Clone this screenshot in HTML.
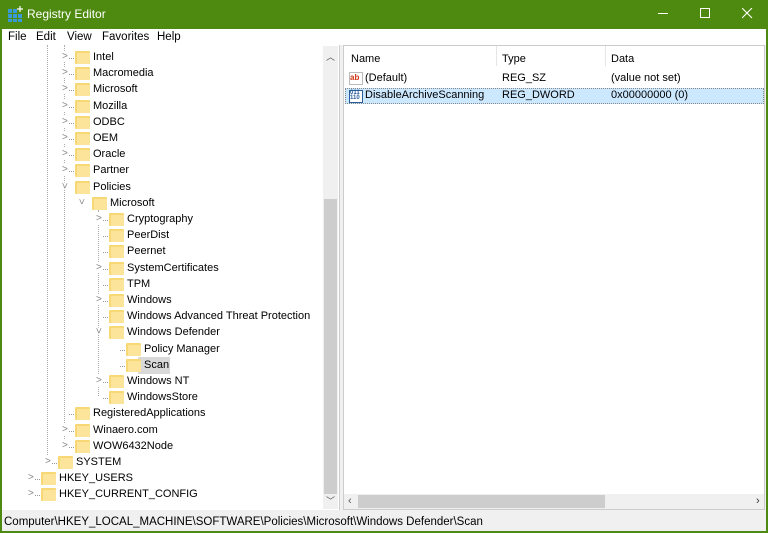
<!DOCTYPE html><html><head><style>
body{margin:0;width:768px;height:533px;overflow:hidden;background:#4c8a12;font-family:"Liberation Sans",sans-serif;font-size:11px;color:#000;position:relative}
.a{position:absolute}
.t{position:absolute;white-space:nowrap}
.fold{position:absolute;width:15px;height:13px;background:#f8d775;border-radius:1px}
.fold:after{content:"";position:absolute;left:2px;top:2px;width:13px;height:11px;background:#fce49a}
.chev{position:absolute;font-size:10px;color:#888}
</style></head><body>
<div class="a" style="left:0;top:0;width:768px;height:29px;background:#4f8a10"></div>
<svg class="a" style="left:8px;top:6px" width="16" height="16"><g fill="#3a9ad9"><rect x="0" y="3" width="4" height="4"/><rect x="5" y="3" width="4" height="4"/><rect x="0" y="8" width="4" height="4"/><rect x="5" y="8" width="4" height="4"/><rect x="10" y="8" width="4" height="4"/><rect x="0" y="13" width="4" height="3"/><rect x="5" y="13" width="4" height="3"/><rect x="10" y="13" width="4" height="3"/></g><path d="M12 0v6M9 3h6" stroke="#fff" stroke-width="1.2"/></svg>
<div class="t" style="left:27px;top:7px;color:#fff;font-size:12px">Registry Editor</div>
<div class="a" style="left:658px;top:13px;width:10px;height:1px;background:#fff"></div>
<div class="a" style="left:700px;top:8px;width:8px;height:8px;border:1px solid #fff"></div>
<svg class="a" style="left:742px;top:8px" width="11" height="11"><path d="M0 0L10 10M10 0L0 10" stroke="#fff" stroke-width="1.1"/></svg>
<div class="a" style="left:2px;top:29px;width:764px;height:502px;background:#f0f0f0"></div>
<div class="a" style="left:2px;top:29px;width:764px;height:16px;background:#fff"></div>
<div class="t" style="left:8px;top:31px;font-size:11.5px">File</div><div class="t" style="left:36px;top:31px;font-size:11.5px">Edit</div><div class="t" style="left:67px;top:31px;font-size:11.5px">View</div><div class="t" style="left:102px;top:31px;font-size:11.5px">Favorites</div><div class="t" style="left:157px;top:31px;font-size:11.5px">Help</div>
<div class="a" style="left:2px;top:45px;width:337px;height:465px;background:#fff;border-right:1px solid #ccc"></div>
<div class="a" style="left:323px;top:46px;width:15px;height:463px;background:#f0f0f0"></div>
<div class="a" style="left:324px;top:199px;width:13px;height:295px;background:#cdcdcd"></div>
<div class="t" style="left:326px;top:50px;font-size:9px;color:#555">︿</div>
<div class="t" style="left:326px;top:494px;font-size:9px;color:#555">﹀</div>
<div class="a" style="left:343px;top:45px;width:422px;height:465px;background:#fff;border:1px solid #ccc;box-sizing:border-box"></div>
<div class="a" style="left:496px;top:46px;width:1px;height:20px;background:#e5e5e5"></div>
<div class="a" style="left:605px;top:46px;width:1px;height:20px;background:#e5e5e5"></div>
<div class="t" style="left:351px;top:53px">Name</div><div class="t" style="left:502px;top:53px">Type</div><div class="t" style="left:611px;top:53px">Data</div>
<div class="a" style="left:349px;top:72px;width:12px;height:11px;border:1px solid #bbb;background:#fff;font-size:8px;color:#d03010;font-weight:bold;line-height:9px">ab</div>
<div class="t" style="left:365px;top:72px">(Default)</div><div class="t" style="left:502px;top:72px">REG_SZ</div><div class="t" style="left:611px;top:72px">(value not set)</div>
<div class="a" style="left:345px;top:88px;width:419px;height:16px;background:#cce8ff;border:1px dotted #888;box-sizing:border-box"></div>
<div class="a" style="left:349px;top:90px;width:12px;height:11px;border:1px solid #2a5c9a;background:#fff;font-size:6px;color:#2a5c9a;line-height:5px;font-weight:bold">011<br>110</div>
<div class="t" style="left:365px;top:89px">DisableArchiveScanning</div><div class="t" style="left:502px;top:89px">REG_DWORD</div><div class="t" style="left:611px;top:89px">0x00000000 (0)</div>
<div class="a" style="left:344px;top:494px;width:420px;height:15px;background:#f0f0f0"></div>
<div class="a" style="left:358px;top:495px;width:247px;height:13px;background:#cdcdcd"></div>
<div class="t" style="left:348px;top:495px;color:#555">‹</div><div class="t" style="left:756px;top:495px;color:#333">›</div>
<div class="t" style="left:4px;top:516px;font-size:11.5px">Computer\HKEY_LOCAL_MACHINE\SOFTWARE\Policies\Microsoft\Windows Defender\Scan</div>
<div class="a" style="left:138px;top:357px;width:32px;height:17px;background:#d9d9d9"></div>
<div class="a" style="left:47px;top:45px;height:410px;border-left:1px dotted #aaa"></div>
<div class="a" style="left:64px;top:45px;height:400px;border-left:1px dotted #aaa"></div>
<div class="a" style="left:98px;top:210px;height:186px;border-left:1px dotted #aaa"></div>
<div id="tree"></div>
<script>
var rows=[["Intel",1,1],["Macromedia",1,1],["Microsoft",1,1],["Mozilla",1,1],["ODBC",1,1],["OEM",1,1],["Oracle",1,1],["Partner",1,1],["Policies",1,2],["Microsoft",2,2],["Cryptography",3,1],["PeerDist",3,0],["Peernet",3,0],["SystemCertificates",3,1],["TPM",3,0],["Windows",3,1],["Windows Advanced Threat Protection",3,0],["Windows Defender",3,2],["Policy Manager",4,0],["Scan",4,0],["Windows NT",3,1],["WindowsStore",3,0],["RegisteredApplications",1,0],["Winaero.com",1,1],["WOW6432Node",1,1],["SYSTEM",0,1],["HKEY_USERS",-1,1],["HKEY_CURRENT_CONFIG",-1,1]];
var h="";rows.forEach(function(r,i){var y=50+i*16.2,x=58+r[1]*17;
h+='<div class="fold" style="left:'+x+'px;top:'+(y+1)+'px"></div><div class="t" style="left:'+(x+18)+'px;top:'+(y+1)+'px;background:'+(r[0]=="Scan"?"transparent":"#fff")+'">'+r[0]+'</div>';
if(r[2]==1)h+='<div class="chev" style="left:'+(x-13)+'px;top:'+(y+1)+'px;background:#fff">&gt;</div>';
if(r[2]==2)h+='<div class="chev" style="left:'+(x-14)+'px;top:'+y+'px;transform:rotate(90deg);background:#fff">&gt;</div>';
if(r[2]!=2)h+='<div class="a" style="left:'+(x-6)+'px;top:'+(y+8)+'px;width:5px;border-top:1px dotted #999"></div>';});
document.getElementById("tree").innerHTML=h;
</script>
</body></html>
